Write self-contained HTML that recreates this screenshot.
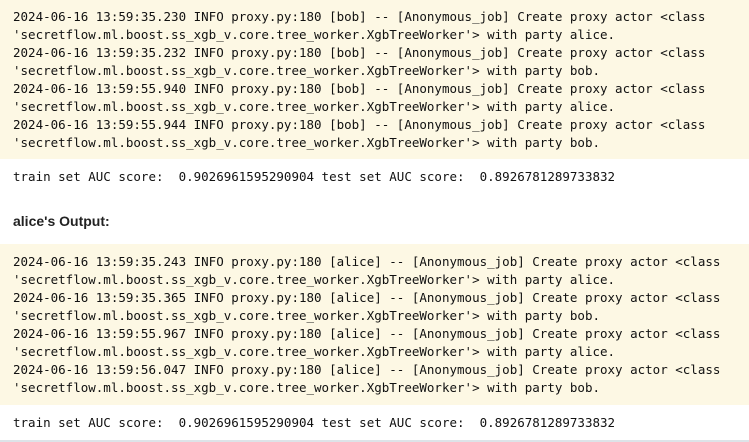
<!DOCTYPE html>
<html><head><meta charset="utf-8"><style>
html,body{margin:0;padding:0;background:#fff;width:749px;height:442px;overflow:hidden;position:relative}
.blk{position:absolute;left:0;width:749px;background:#fdf8e4}
.mono{font-family:"DejaVu Sans Mono","Liberation Mono",monospace;font-size:12.5px;line-height:18px;color:#111;white-space:pre;position:absolute;left:13px}
.h{position:absolute;left:13px;font-family:"Liberation Sans",sans-serif;font-weight:bold;font-size:14px;color:#222}
</style></head><body>
<div class="blk" style="top:0;height:159px"></div>
<div class="mono" style="top:8px">2024-06-16 13:59:35.230 INFO proxy.py:180 [bob] -- [Anonymous_job] Create proxy actor &lt;class
'secretflow.ml.boost.ss_xgb_v.core.tree_worker.XgbTreeWorker'&gt; with party alice.
2024-06-16 13:59:35.232 INFO proxy.py:180 [bob] -- [Anonymous_job] Create proxy actor &lt;class
'secretflow.ml.boost.ss_xgb_v.core.tree_worker.XgbTreeWorker'&gt; with party bob.
2024-06-16 13:59:55.940 INFO proxy.py:180 [bob] -- [Anonymous_job] Create proxy actor &lt;class
'secretflow.ml.boost.ss_xgb_v.core.tree_worker.XgbTreeWorker'&gt; with party alice.
2024-06-16 13:59:55.944 INFO proxy.py:180 [bob] -- [Anonymous_job] Create proxy actor &lt;class
'secretflow.ml.boost.ss_xgb_v.core.tree_worker.XgbTreeWorker'&gt; with party bob.</div>
<div class="mono" style="top:168px">train set AUC score:  0.9026961595290904 test set AUC score:  0.8926781289733832</div>
<div class="h" style="top:213px">alice's Output:</div>
<div class="blk" style="top:244px;height:161px"></div>
<div class="mono" style="top:253px">2024-06-16 13:59:35.243 INFO proxy.py:180 [alice] -- [Anonymous_job] Create proxy actor &lt;class
'secretflow.ml.boost.ss_xgb_v.core.tree_worker.XgbTreeWorker'&gt; with party alice.
2024-06-16 13:59:35.365 INFO proxy.py:180 [alice] -- [Anonymous_job] Create proxy actor &lt;class
'secretflow.ml.boost.ss_xgb_v.core.tree_worker.XgbTreeWorker'&gt; with party bob.
2024-06-16 13:59:55.967 INFO proxy.py:180 [alice] -- [Anonymous_job] Create proxy actor &lt;class
'secretflow.ml.boost.ss_xgb_v.core.tree_worker.XgbTreeWorker'&gt; with party alice.
2024-06-16 13:59:56.047 INFO proxy.py:180 [alice] -- [Anonymous_job] Create proxy actor &lt;class
'secretflow.ml.boost.ss_xgb_v.core.tree_worker.XgbTreeWorker'&gt; with party bob.</div>
<div class="mono" style="top:414px">train set AUC score:  0.9026961595290904 test set AUC score:  0.8926781289733832</div>
<div style="position:absolute;left:0;top:440px;width:749px;height:2px;background:#dde3e8"></div>
</body></html>
